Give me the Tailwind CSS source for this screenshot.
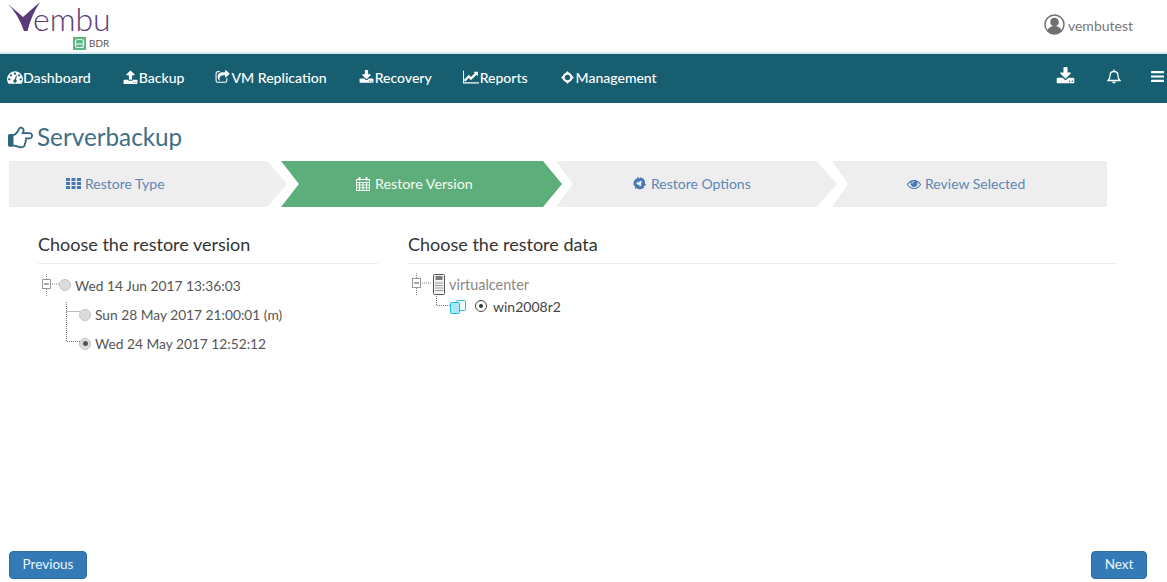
<!DOCTYPE html>
<html lang="en">
<head>
<meta charset="utf-8">
<title>Vembu BDR</title>
<script src="https://cdn.jsdelivr.net/npm/@tailwindcss/browser@4"></script>
</head>
<body class="bg-white">
<div class="w-[1167px] h-[582px] overflow-hidden flex flex-col font-['Lato',sans-serif] text-[14px] text-[#333]">

  <header class="h-[54px] shrink-0 flex justify-between border-b-2 border-[#d9e8ee]">
    <div class="relative w-[120px]">
      <svg class="absolute left-0 top-0 w-[44px] h-[36px]" viewBox="0 0 44 36"><path d="M8 4 L23 17 L40 2 Q31 16 27.500 31 L24 31 Q18 14 8 4Z" fill="#5b3a78"/></svg>
      <span class="absolute left-[33px] top-[0px] text-[32px] leading-[38px] font-light text-[#5b3a78]">embu</span>
      <div class="absolute left-[73px] top-[37px] flex items-center gap-[3px]">
        <svg class="w-[13px] h-[13px]" viewBox="0 0 13 13"><rect width="13" height="13" fill="#5cb885"/><rect x="2.500" y="2.500" width="8" height="8" rx="2" fill="none" stroke="#e8f6ee" stroke-width="1.200"/><path d="M2.500 7h8" stroke="#e8f6ee" stroke-width="1.200"/></svg>
        <span class="text-[10px] leading-[13px] text-[#555]">BDR</span>
      </div>
    </div>
    <div class="flex items-center pr-[34px] pb-[3px] gap-[3px]">
      <svg class="w-[21px] h-[21px] mb-[1px]" viewBox="0 0 21 21"><circle cx="10.500" cy="10.500" r="9.500" fill="#fff" stroke="#707070" stroke-width="1.500"/><circle cx="10.500" cy="8" r="4.300" fill="#707070"/><path d="M3.500 16.500 Q5 12 10.500 12 Q16 12 17.500 16.500 Q14.500 20 10.500 20 Q6.500 20 3.500 16.500Z" fill="#707070"/></svg>
      <span class="text-[14px] text-[#777] mt-[2px]">vembutest</span>
    </div>
  </header>

  <nav class="h-[49px] shrink-0 bg-[#175e70] flex items-center justify-between text-white pl-[7px] pr-[3px]">
    <ul class="flex items-center gap-[32px] text-[14px] font-medium pb-[2px]">
      <li class="flex items-center">
        <svg class="w-[16px] h-[16px]" viewBox="0 0 1792 1792" fill="#fff"><path d="M384 1152q0-53-37.500-90.500t-90.500-37.500-90.500 37.500-37.500 90.500 37.500 90.500 90.500 37.500 90.500-37.500 37.500-90.500zm192-448q0-53-37.500-90.500t-90.500-37.500-90.500 37.500-37.500 90.500 37.500 90.500 90.500 37.500 90.500-37.500 37.500-90.500zm428 481l101-382q6-26-7.500-48.500t-38.500-29.500-48 6.500-30 39.500l-101 382q-60 5-107 43.500t-63 98.500q-20 77 20 146t117 89 146-20 89-117q16-60-6-117t-72-91zm660-33q0-53-37.500-90.500t-90.500-37.500-90.500 37.500-37.500 90.500 37.500 90.500 90.500 37.500 90.500-37.500 37.500-90.500zm-640-640q0-53-37.500-90.500t-90.500-37.500-90.500 37.500-37.500 90.500 37.500 90.500 90.500 37.500 90.500-37.500 37.500-90.500zm448 192q0-53-37.500-90.500t-90.500-37.500-90.500 37.500-37.500 90.500 37.500 90.500 90.500 37.500 90.500-37.500 37.500-90.500zm320 448q0 261-141 483-19 29-54 29h-1402q-35 0-54-29-141-221-141-483 0-182 71-348t191-286 286-191 348-71 348 71 286 191 191 286 71 348z"/></svg>
        <span class="text-[14.2px]">Dashboard</span>
      </li>
      <li class="flex items-center gap-[1px]">
        <svg class="w-[15px] h-[15px]" viewBox="0 0 1792 1792" fill="#fff"><path d="M1344 1472q0-26-19-45t-45-19-45 19-19 45 19 45 45 19 45-19 19-45zm256 0q0-26-19-45t-45-19-45 19-19 45 19 45 45 19 45-19 19-45zm128-224v320q0 40-28 68t-68 28h-1472q-40 0-68-28t-28-68v-320q0-40 28-68t68-28h427q21 56 70.500 92t110.500 36h256q61 0 110.500-36t70.500-92h427q40 0 68 28t28 68zm-325-648q-17 40-59 40h-256v448q0 26-19 45t-45 19h-256q-26 0-45-19t-19-45v-448h-256q-42 0-59-40-17-39 14-69l448-448q18-19 45-19t45 19l448 448q31 30 14 69z"/></svg>
        <span>Backup</span>
      </li>
      <li class="flex items-center gap-[1px] -ml-[1px]">
        <svg class="w-[15px] h-[15px]" viewBox="0 0 1792 1792" fill="#fff"><path d="M1472 989v259q0 119-84.500 203.500t-203.500 84.500h-832q-119 0-203.500-84.500t-84.500-203.500v-832q0-119 84.500-203.500t203.500-84.500h255q13 0 22.500 9.500t9.500 22.500q0 27-26 32-77 26-133 60-10 4-16 4h-112q-66 0-113 47t-47 113v832q0 66 47 113t113 47h832q66 0 113-47t47-113v-214q0-19 18-29 28-13 54-37 16-16 35-8 21 9 21 29zm237-496l-384 384q-18 19-45 19-12 0-25-5-39-17-39-59v-192h-160q-323 0-438 131-119 137-74 473 3 23-20 34-8 2-12 2-16 0-26-13-10-14-21-31t-39.500-68.500-49.500-99.500-38.500-114-17.500-122q0-49 3.500-91t14-90 28-88 47-81.500 68.500-74 94.500-61.500 124.500-48.500 159.500-30.500 196.500-11h160v-192q0-42 39-59 13-5 25-5 26 0 45 19l384 384q19 19 19 45t-19 45z"/></svg>
        <span class="text-[14.1px]">VM Replication</span>
      </li>
      <li class="flex items-center gap-[1px]">
        <svg class="w-[15px] h-[15px]" viewBox="0 0 1792 1792" fill="#fff"><path d="M1344 1344q0-26-19-45t-45-19-45 19-19 45 19 45 45 19 45-19 19-45zm256 0q0-26-19-45t-45-19-45 19-19 45 19 45 45 19 45-19 19-45zm128-224v320q0 40-28 68t-68 28h-1472q-40 0-68-28t-28-68v-320q0-40 28-68t68-28h465l135 136q58 56 136 56t136-56l136-136h464q40 0 68 28t28 68zm-325-569q17 41-14 70l-448 448q-18 19-45 19t-45-19l-448-448q-31-29-14-70 17-39 59-39h256v-448q0-26 19-45t45-19h256q26 0 45 19t19 45v448h256q42 0 59 39z"/></svg>
        <span>Recovery</span>
      </li>
      <li class="flex items-center -ml-[1px] mr-[1px]">
        <svg class="w-[17px] h-[16px]" viewBox="0 0 2048 1792" fill="#fff"><path d="M1920 1536v128h-1920v-1536h128v1408h1792zm-128-1248v435q0 21-19.500 29.500t-35.500-7.500l-121-121-633 633q-10 10-23 10t-23-10l-233-233-416 416-192-192 585-585q10-10 23-10t23 10l233 233 464-464-121-121q-16-16-7.500-35.500t29.500-19.500h435q14 0 23 9t9 23z"/></svg>
        <span>Reports</span>
      </li>
      <li class="flex items-center gap-[2px]">
        <svg class="w-[13px] h-[13px]" viewBox="0 0 13 13" fill="none"><circle cx="6.500" cy="6.500" r="3.800" stroke="#fff" stroke-width="2.200"/><path d="M6.500 0 L8.200 2.200 H4.800Z M6.500 13 L8.200 10.800 H4.800Z M0 6.500 L2.200 4.800 V8.200Z M13 6.500 L10.800 4.800 V8.200Z" fill="#fff"/></svg>
        <span>Management</span>
      </li>
    </ul>
    <div class="flex items-center pb-[5px]">
      <svg class="w-[19px] h-[19px] mr-[32px]" viewBox="0 0 1792 1792" fill="#fff"><path d="M1344 1344q0-26-19-45t-45-19-45 19-19 45 19 45 45 19 45-19 19-45zm256 0q0-26-19-45t-45-19-45 19-19 45 19 45 45 19 45-19 19-45zm128-224v320q0 40-28 68t-68 28h-1472q-40 0-68-28t-28-68v-320q0-40 28-68t68-28h465l135 136q58 56 136 56t136-56l136-136h464q40 0 68 28t28 68zm-325-569q17 41-14 70l-448 448q-18 19-45 19t-45-19l-448-448q-31-29-14-70 17-39 59-39h256v-448q0-26 19-45t45-19h256q26 0 45 19t19 45v448h256q42 0 59 39z"/></svg>
      <svg class="w-[14px] h-[15px] mr-[30px]" viewBox="0 0 14 15" fill="none" stroke="#fff" stroke-width="1.300"><path d="M1 11.500 Q3 10 3 6.500 Q3 2.500 7 2.500 Q11 2.500 11 6.500 Q11 10 13 11.500Z"/><path d="M7 .5V2.500M5.500 12.500 Q7 15 8.500 12.500"/></svg>
      <svg class="w-[13px] h-[13px]" viewBox="0 0 13 13" fill="#fff"><rect y="1" width="13" height="2.200" rx=".5"/><rect y="5.400" width="13" height="2.200" rx=".5"/><rect y="9.800" width="13" height="2.200" rx=".5"/></svg>
    </div>
  </nav>

  <main class="flex flex-col flex-1 min-h-0">
    <h1 class="flex items-center gap-[4px] pl-[8px] pt-[13px] h-[55px] text-[24.25px] leading-[30px] text-[#3f6f84]">
      <svg class="w-[25px] h-[25px]" viewBox="0 0 1792 1792" fill="#2f6580"><rect x="40" y="780" width="330" height="760" rx="60"/><path d="M256 1344q0-26-19-45t-45-19-45 19-19 45 19 45 45 19 45-19 19-45zm1408-576q0-51-39-89.500t-89-38.500h-576q0-20 15-48.500t33-55 33-68 15-84.500q0-67-44.500-97.500t-115.500-30.500q-24 0-90 139-24 44-37 65-40 64-112 145-71 81-101 106-69 57-140 57h-32v640h32q72 0 167 32t193.500 64 179.500 32q189 0 189-167 0-26-5-56 30-16 47.500-52.500t17.500-73.500-18-69q53-50 53-119 0-25-10-55.500t-25-47.500h331q52 0 90-38t38-90zm128-1q0 105-75.500 181t-180.500 76h-169q-4 62-37 119 3 21 3 43 0 101-60 178 1 139-85 219.500t-227 80.500q-133 0-322-69-164-59-223-59h-288q-53 0-90.500-37.500t-37.500-90.500v-640q0-53 37.500-90.500t90.500-37.500h288q10 0 21.500-4.500t23.500-14 22.500-18 24-22.500 20.500-21.500 19-21.500 14-17q65-74 100-129 13-21 33-62t37-72 40.500-63 55-49.500 69.500-17.500q125 0 206.500 67t81.500 189q0 68-22 128h374q104 0 180 76t76 179z"/></svg>
      <span>Serverbackup</span>
    </h1>

    <ol class="flex ml-[9px] w-[1098px] h-[46px] mt-[3px] text-[14px] text-[#5f86b3]">
      <li class="w-[278px] shrink-0 bg-[#eeeeee] flex items-center gap-[4px] pl-[57px] pb-[1px] [clip-path:polygon(0_0,258px_0,278px_23px,258px_46px,0_46px)]">
        <svg class="w-[15px] h-[13px]" viewBox="0 0 15 13" fill="#4578b5"><rect y="1" width="4" height="3"/><rect x="5.500" y="1" width="4" height="3"/><rect x="11" y="1" width="4" height="3"/><rect y="5" width="4" height="3"/><rect x="5.500" y="5" width="4" height="3"/><rect x="11" y="5" width="4" height="3"/><rect y="9" width="4" height="3"/><rect x="5.500" y="9" width="4" height="3"/><rect x="11" y="9" width="4" height="3"/></svg>
        <span>Restore Type</span>
      </li>
      <li class="w-[281px] shrink-0 -ml-[6px] bg-[#5eae7b] text-[#f4fbf6] flex items-center gap-[5px] pl-[75px] pb-[1px] [clip-path:polygon(0_0,262px_0,281px_23px,262px_46px,0_46px,18px_23px)]">
        <svg class="w-[14px] h-[14px]" viewBox="0 0 14 14" fill="none" stroke="#f4fbf6"><rect x=".5" y="2.500" width="13" height="11"/><path d="M.5 5.500h13M.5 8h13M.5 10.700h13M3.500 5.500v8M7 5.500v8M10.500 5.500v8"/><path d="M3.500 0v3.500M10.500 0v3.500" stroke-width="2"/></svg>
        <span class="text-[14.25px]">Restore Version</span>
      </li>
      <li class="w-[281px] shrink-0 -ml-[6px] bg-[#eeeeee] flex items-center gap-[4px] pl-[76px] pb-[1px] [clip-path:polygon(0_0,261px_0,281px_23px,261px_46px,0_46px,17px_23px)]">
        <svg class="w-[15px] h-[15px]" viewBox="0 0 15 15">
          <g id="recycle-arm" fill="#4578b5"><path d="M3.200 9.500 A5 5 0 0 1 5.800 3.700" fill="none" stroke="#4578b5" stroke-width="3"/><path d="M5 .8 L9.800 3.500 L6 6.800Z"/></g>
          <g fill="#4578b5" transform="rotate(120 7.500 7.500)"><path d="M3.200 9.500 A5 5 0 0 1 5.800 3.700" fill="none" stroke="#4578b5" stroke-width="3"/><path d="M5 .8 L9.800 3.500 L6 6.800Z"/></g>
          <g fill="#4578b5" transform="rotate(240 7.500 7.500)"><path d="M3.200 9.500 A5 5 0 0 1 5.800 3.700" fill="none" stroke="#4578b5" stroke-width="3"/><path d="M5 .8 L9.800 3.500 L6 6.800Z"/></g>
        </svg>
        <span>Restore Options</span>
      </li>
      <li class="w-[275px] shrink-0 -ml-[5px] bg-[#eeeeee] flex items-center gap-[4px] pl-[75px] pb-[1px] [clip-path:polygon(0_0,275px_0,275px_46px,0_46px,16px_23px)]">
        <svg class="w-[14px] h-[14px]" viewBox="0 0 1792 1792" fill="#4578b5"><path d="M1664 960q-152-236-381-353 61 104 61 225 0 185-131.500 316.500t-316.500 131.500-316.500-131.500-131.500-316.500q0-121 61-225-229 117-381 353 133 205 333.500 326.500t434.500 121.500 434.500-121.500 333.500-326.500zm-720-384q0-20-14-34t-34-14q-125 0-214.500 89.500t-89.500 214.500q0 20 14 34t34 14 34-14 14-34q0-86 61-147t147-61q20 0 34-14t14-34zm848 384q0 34-20 69-140 230-376.500 368.500t-499.500 138.500-499.500-139-376.500-368q-20-35-20-69t20-69q140-229 376.500-368t499.500-139 499.500 139 376.500 368q20 35 20 69z"/></svg>
        <span>Review Selected</span>
      </li>
    </ol>

    <section class="flex pl-[38px] gap-[30px] pt-[26px]">
      <div class="w-[340px] shrink-0">
        <h2 class="text-[18px] leading-[22px] h-[30px] border-b border-[#eeeeee] box-content text-[#333]">Choose the restore version</h2>
        <div class="pl-[4px] pt-[9px] text-[13.75px] text-[#555]">
          <div class="flex items-center h-[24px]">
            <svg class="w-[17px] h-[24px] shrink-0" viewBox="0 0 17 24" fill="none"><path d="M4.500 1V6M4.500 16V24M10 11H17" stroke="#888" stroke-dasharray="1 1"/><rect x=".5" y="6.500" width="8" height="9" fill="#fff" stroke="#999"/><path d="M2 11H7" stroke="#555"/></svg>
            <span class="w-[12px] h-[12px] rounded-full bg-[#dcdcdc] border border-[#c4c4c4] shrink-0"></span>
            <span class="ml-[4px] mt-[2px]">Wed 14 Jun 2017 13:36:03</span>
          </div>
          <div class="relative pl-[37px] pt-[3px]">
            <svg class="absolute left-[24px] top-[0px] w-[14px] h-[46px]" viewBox="0 0 14 46" fill="none"><path d="M.5 5V44.500H14M.5 14.500H14" stroke="#777" stroke-dasharray="1 1"/></svg>
            <div class="flex items-center h-[29px]">
              <span class="w-[12px] h-[12px] rounded-full bg-[#dcdcdc] border border-[#c4c4c4] shrink-0"></span>
              <span class="ml-[4px] mt-[2px]">Sun 28 May 2017 21:00:01 (m)</span>
            </div>
            <div class="flex items-center h-[29px]">
              <span class="w-[12px] h-[12px] rounded-full bg-[#dcdcdc] border border-[#c4c4c4] shrink-0 flex items-center justify-center"><span class="w-[5px] h-[5px] rounded-full bg-[#555]"></span></span>
              <span class="ml-[4px] mt-[2px]">Wed 24 May 2017 12:52:12</span>
            </div>
          </div>
        </div>
      </div>

      <div class="w-[709px] shrink-0">
        <h2 class="text-[18px] leading-[22px] h-[30px] border-b border-[#eeeeee] box-content text-[#333]">Choose the restore data</h2>
        <div class="pl-[4px] pt-[8px]">
          <div class="flex items-center h-[24px]">
            <svg class="w-[21px] h-[24px] shrink-0" viewBox="0 0 21 24" fill="none"><path d="M4.500 1V6M4.500 16V24M10 11H20" stroke="#888" stroke-dasharray="1 1"/><rect x=".5" y="6.500" width="8" height="9" fill="#fff" stroke="#999"/><path d="M2 11H7" stroke="#555"/></svg>
            <svg class="w-[12px] h-[21px] shrink-0" viewBox="0 0 12 21" fill="none"><rect x=".5" y=".5" width="11" height="20" rx="1" fill="#f4f4f4" stroke="#555"/><path d="M2.500 3H9.500M2.500 5H9.500" stroke="#555" stroke-width="1.300"/><path d="M2 9H10M2 11.500H10M2 14H10M2 16.500H10" stroke="#999"/></svg>
            <span class="ml-[4px] mt-[2px] text-[14.4px] text-[#888]">virtualcenter</span>
          </div>
          <div class="relative flex items-center h-[20px] pl-[38px] text-[#444]">
            <svg class="absolute left-[24px] top-0 w-[14px] h-[14px]" viewBox="0 0 14 14" fill="none"><path d="M.5 0V9.500H14" stroke="#777" stroke-dasharray="1 1"/></svg>
            <svg class="w-[16px] h-[15px] shrink-0" viewBox="0 0 16 15" fill="none" stroke="#2cbbdc"><rect x="6.500" y="1.500" width="9" height="10" rx="1" fill="#eafafd"/><rect x=".5" y="3.500" width="9" height="11" rx="1" fill="#a6e8f6"/></svg>
            <span class="ml-[9px] w-[12px] h-[12px] rounded-full border border-[#444] shrink-0 flex items-center justify-center"><span class="w-[4px] h-[4px] rounded-full bg-[#333]"></span></span>
            <span class="ml-[6px]">win2008r2</span>
          </div>
        </div>
      </div>
    </section>

    <footer class="mt-auto flex justify-between pl-[9px] pr-[20px] pb-[3px]">
      <button class="h-[28px] w-[78px] pb-[1px] rounded-[4px] bg-[#337ab7] border border-[#2e6da4] text-[#eef6fb] text-[13.5px]">Previous</button>
      <button class="h-[28px] w-[56px] pb-[1px] rounded-[4px] bg-[#337ab7] border border-[#2e6da4] text-[#eef6fb] text-[13.5px]">Next</button>
    </footer>
  </main>
</div>
</body>
</html>
